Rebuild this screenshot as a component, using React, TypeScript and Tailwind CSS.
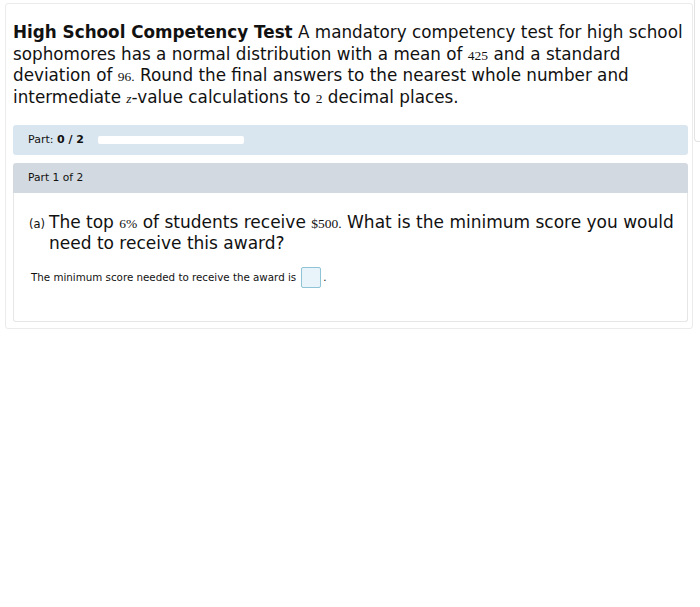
import React from "react";

const M = ({ children }: { children: React.ReactNode }) => (
  <span className="font-['Liberation_Serif',serif] text-[13.5px] leading-none">{children}</span>
);

export default function App() {
  return (
    <div className="w-[700px] h-[607px] bg-white relative font-['DejaVu_Sans',Verdana,sans-serif] text-[#111]">
      <div className="absolute right-0 top-0 w-[6px] h-[142px] border-l border-b border-[#e3e3e3] rounded-bl-[4px]" />
      <div className="pl-[5px] pt-[3px]">
        <div className="w-[688px] border border-[#ebebeb] rounded-[3px] pl-[7px] pr-[4px] pt-[18px] pb-[6px]">
          <p className="text-[16.8px] leading-[21.7px] mr-[-4px]">
            <b>High School Competency Test</b> A mandatory competency test for high school sophomores has a normal distribution with a mean of <M>425</M> and a standard deviation of <M>96.</M> Round the final answers to the nearest whole number and intermediate <M><i>z</i></M>-value calculations to <M>2</M> decimal places.
          </p>
          <div className="mt-[16px] h-[30px] bg-[#dae6ef] rounded-[3px] flex items-center pl-[15px] text-[11px]">
            <span>Part: <b>0 / 2</b></span>
            <div className="ml-[14px] w-[146px] h-[8px] bg-white rounded-[2px]" />
          </div>
          <div className="mt-[8px] h-[30px] bg-[#d3d9e0] rounded-t-[3px] flex items-center pl-[15px] text-[10.7px]">
            Part 1 of 2
          </div>
          <div className="h-[129px] border border-t-0 border-[#e6e6e6] rounded-b-[3px] pl-[15px] pt-[19px]">
            <div className="flex">
              <span className="w-[20px] text-[11.5px] leading-[22px] pt-[1px]">(a)</span>
              <p className="flex-1 text-[17px] leading-[21px]">
                The top <M>6%</M> of students receive <M>$500.</M> What is the minimum score you would need to receive this award?
              </p>
            </div>
            <div className="mt-[13px] flex items-center text-[10.3px] pl-[2px]">
              <span>The minimum score needed to receive the award is</span>
              <span className="ml-[5px] w-[20px] h-[21px] border border-[#8fc3d6] bg-[#e8f4fa] rounded-[2px]" />
              <span className="ml-[2px]">.</span>
            </div>
          </div>
        </div>
      </div>
    </div>
  );
}
